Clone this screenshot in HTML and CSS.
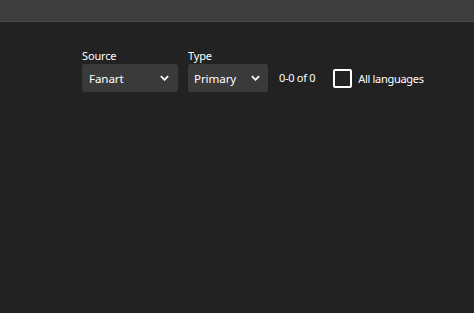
FILE: index.html
```html
<!DOCTYPE html>
<html lang="en">
<head>
  <meta charset="UTF-8" />
  <title>Images</title>
  <link rel="stylesheet" href="styles.css">
</head>
<body>
  <div class="header"></div>

  <div class="filters">
    <div class="field">
      <label class="field-label">Source</label>
      <div class="select source">
        <span>Fanart</span>
        <svg class="chevron" viewBox="0 0 10 6" width="9" height="6"><path d="M1 1l4 4 4-4" /></svg>
      </div>
    </div>
    <div class="field">
      <label class="field-label">Type</label>
      <div class="select type">
        <span>Primary</span>
        <svg class="chevron" viewBox="0 0 10 6" width="9" height="6"><path d="M1 1l4 4 4-4" /></svg>
      </div>
    </div>
    <div class="count">0-0 of 0</div>
    <label class="check">
      <span class="box"></span>
      <span>All languages</span>
    </label>
  </div>
</body>
</html>
```

FILE: styles.css
```css
* {
  box-sizing: border-box;
}

body {
  margin: 0;
  background-color: #222;
  color: #fff;
  font-family: 'Noto Sans', sans-serif;
  height: 313px;
}

.header {
  height: 22px;
  background-color: #3e3e3e;
  border-bottom: 1px solid #4a4a4a;
}

.filters {
  display: flex;
  align-items: flex-end;
  padding: 25px 0 0 82px;
}

.field {
  display: flex;
  flex-direction: column;
  margin-right: 10px;
}

.field-label {
  font-size: 11px;
  line-height: 17px;
  letter-spacing: -0.15px;
}

.select {
  height: 28px;
  background-color: #3a3a3a;
  border-radius: 3px;
  display: flex;
  align-items: center;
  justify-content: space-between;
  padding: 0 9px 0 7px;
  font-size: 11.6px;
  letter-spacing: -0.1px;
}

.select.source {
  width: 96px;
}

.select.type {
  width: 80px;
  padding: 0 8px 0 6px;
}

.chevron {
  fill: none;
  stroke: #fff;
  stroke-width: 2;
}

.count {
  height: 28px;
  line-height: 28px;
  font-size: 11px;
  letter-spacing: -0.3px;
  margin-left: 1px;
}

.check {
  height: 28px;
  display: flex;
  align-items: center;
  margin-left: 18px;
  font-size: 11px;
  letter-spacing: -0.3px;
}

.box {
  width: 19px;
  height: 19px;
  border: 2px solid #fff;
  border-radius: 2px;
  margin-right: 6px;
}
```
